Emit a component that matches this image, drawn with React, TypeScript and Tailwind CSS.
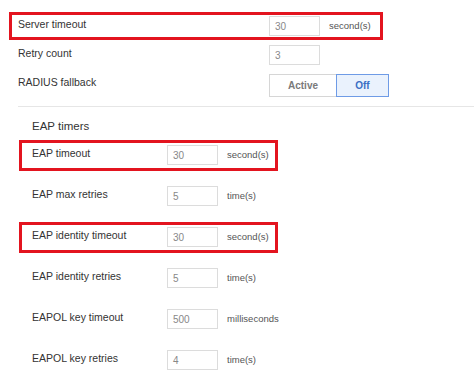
const font = { fontFamily: '"Liberation Sans", Arial, sans-serif' }

function NumInput({ value }: { value: string }) {
  return (
    <div className="flex h-[20px] w-[51px] shrink-0 items-center border border-[#dcdcdc] bg-white pl-[5px] text-[10px] text-[#888]">
      {value}
    </div>
  )
}

function TopRow({
  label,
  highlight,
  children,
}: {
  label: string
  highlight?: boolean
  children: React.ReactNode
}) {
  return (
    <div
      className={`flex h-[28px] w-[374px] items-start border-[3px] pt-[1px] ${
        highlight ? 'border-[#e3141f]' : 'border-transparent'
      }`}
    >
      <div className="w-[257px] shrink-0 pl-[6px] pt-[1px] text-[10.5px] leading-[14px] text-[#333]">{label}</div>
      {children}
    </div>
  )
}

function EapRow({
  label,
  value,
  unit,
  highlight,
}: {
  label: string
  value: string
  unit: string
  highlight?: boolean
}) {
  return (
    <div
      className={`flex h-[31px] w-[259px] items-start border-[3px] pt-[2px] ${
        highlight ? 'border-[#e3141f]' : 'border-transparent'
      }`}
    >
      <div className="w-[145px] shrink-0 pl-[10px] pt-[1px] text-[10.5px] leading-[14px] text-[#333]">{label}</div>
      <NumInput value={value} />
      <span className="ml-[9px] text-[9.5px] leading-[20px] text-[#555]">{unit}</span>
    </div>
  )
}

export default function App() {
  const eapRows = [
    { label: 'EAP timeout', value: '30', unit: 'second(s)', highlight: true },
    { label: 'EAP max retries', value: '5', unit: 'time(s)' },
    { label: 'EAP identity timeout', value: '30', unit: 'second(s)', highlight: true },
    { label: 'EAP identity retries', value: '5', unit: 'time(s)' },
    { label: 'EAPOL key timeout', value: '500', unit: 'milliseconds' },
    { label: 'EAPOL key retries', value: '4', unit: 'time(s)' },
  ]

  return (
    <div className="h-[390px] w-[474px] overflow-hidden bg-white" style={font}>
      <div className="flex flex-col gap-[1px] pl-[9px] pt-[12px]">
        <TopRow label="Server timeout" highlight>
          <NumInput value="30" />
          <span className="ml-[9px] text-[9.5px] leading-[20px] text-[#555]">second(s)</span>
        </TopRow>
        <TopRow label="Retry count">
          <NumInput value="3" />
        </TopRow>
        <TopRow label="RADIUS fallback">
          <div className="flex h-[23px] text-[10px] font-bold">
            <div className="flex w-[67px] items-center justify-center border border-r-0 border-[#d6d6d6] text-[#7a7a7a]">
              Active
            </div>
            <div className="flex w-[53px] items-center justify-center border border-[#6e9be6] bg-[#eaf2fd] text-[#3b6fc4]">
              Off
            </div>
          </div>
        </TopRow>
      </div>

      <div className="ml-[18px] mt-[8px] border-t border-[#e6e6e6]" />

      <div className="pl-[19px]">
        <div className="pl-[13px] pt-[11px] text-[11.5px] leading-[16px] text-[#333]">EAP timers</div>
        <div className="mt-[6px] flex flex-col gap-[10px]">
          {eapRows.map((r) => (
            <EapRow key={r.label} {...r} />
          ))}
        </div>
      </div>
    </div>
  )
}
